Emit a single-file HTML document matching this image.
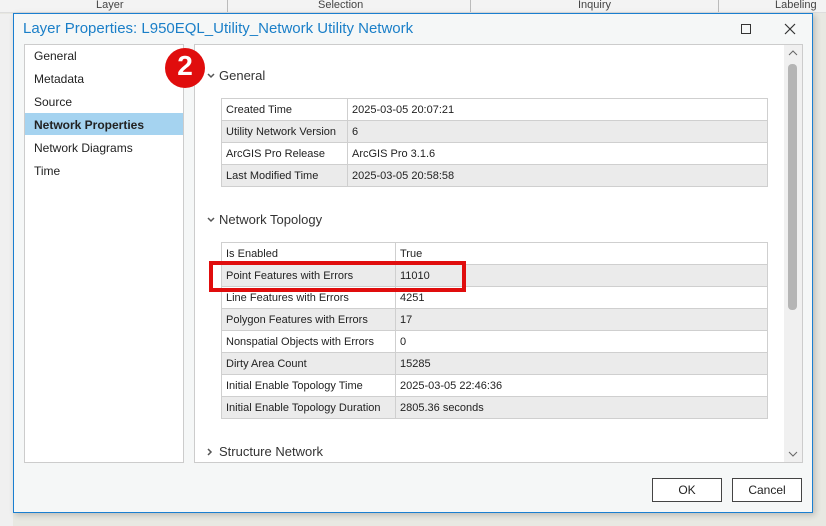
<!DOCTYPE html>
<html><head><style>
*{margin:0;padding:0;box-sizing:border-box}
body{width:826px;height:526px;overflow:hidden;background:#e8e8e2;font-family:"Liberation Sans",sans-serif;position:relative}
.abs{position:absolute}
.t{font-size:11px;color:#222}
table{border-collapse:collapse;position:absolute;font-size:11px;color:#222}
td{border:1px solid #cfcfcf;height:22px;padding:0 4px;white-space:nowrap}
tr:nth-child(even) td{background:#ebebeb}
.sec{font-size:13px;color:#333}
</style></head><body>
<div class="abs" style="left:0;top:0;width:826px;height:13px;background:#f3f3f3;border-bottom:1px solid #ddd"></div>
<div class="abs t" style="left:96px;top:-1px;color:#444">Layer</div>
<div class="abs t" style="left:318px;top:-1px;color:#444">Selection</div>
<div class="abs t" style="left:578px;top:-1px;color:#444">Inquiry</div>
<div class="abs t" style="left:775px;top:-1px;color:#444">Labeling</div>
<div class="abs" style="left:227px;top:0;width:1px;height:12px;background:#bbb"></div>
<div class="abs" style="left:470px;top:0;width:1px;height:12px;background:#bbb"></div>
<div class="abs" style="left:718px;top:0;width:1px;height:12px;background:#bbb"></div>
<div class="abs" style="left:0;top:14px;width:13px;height:512px;background:#f0f0f0"></div>
<div class="abs" style="left:13px;top:13px;width:800px;height:500px;background:#f5f7f7;border:1px solid #1a7fd0;box-shadow:2px 2px 6px rgba(0,0,0,.2)"></div>
<div class="abs" style="left:23px;top:20px;font-size:15px;color:#1a7fc8">Layer Properties: L950EQL_Utility_Network Utility Network</div>
<div class="abs" style="left:741px;top:24px;width:10px;height:10px;border:1px solid #333"></div>
<svg class="abs" style="left:784px;top:23px" width="12" height="12"><path d="M1 1L11 11M11 1L1 11" stroke="#333" stroke-width="1.2"/></svg>
<div class="abs" style="left:24px;top:44px;width:160px;height:419px;background:#fff;border:1px solid #ccc"></div>
<div class="abs" style="left:25px;top:113px;width:158px;height:22px;background:#a5d3f0"></div>
<div class="abs t" style="left:34px;top:49px;font-size:12px">General</div>
<div class="abs t" style="left:34px;top:72px;font-size:12px">Metadata</div>
<div class="abs t" style="left:34px;top:95px;font-size:12px">Source</div>
<div class="abs t" style="left:34px;top:118px;font-size:12px;font-weight:bold">Network Properties</div>
<div class="abs t" style="left:34px;top:141px;font-size:12px">Network Diagrams</div>
<div class="abs t" style="left:34px;top:164px;font-size:12px">Time</div>
<div class="abs" style="left:194px;top:44px;width:609px;height:419px;background:#fff;border:1px solid #ccc"></div>
<div class="abs" style="left:784px;top:45px;width:18px;height:417px;background:#f0f0f0"></div>
<div class="abs" style="left:788px;top:64px;width:9px;height:246px;background:#b5b5b5;border-radius:4px"></div>
<svg class="abs" style="left:788px;top:50px" width="10" height="6"><path d="M1 5L5 1L9 5" stroke="#666" fill="none"/></svg>
<svg class="abs" style="left:788px;top:451px" width="10" height="6"><path d="M1 1L5 5L9 1" stroke="#666" fill="none"/></svg>
<div class="abs" style="left:165px;top:48px;width:40px;height:40px;border-radius:50%;background:#e00d0d"></div>
<div class="abs" style="left:165px;top:50px;width:40px;text-align:center;color:#fff;font-size:28px;font-weight:bold">2</div>
<svg class="abs" style="left:207px;top:73px" width="8" height="6"><path d="M1 1L4 4L7 1" stroke="#555" stroke-width="1.5" fill="none"/></svg>
<div class="abs sec" style="left:219px;top:68px">General</div>
<table style="left:221px;top:98px;width:547px"><colgroup><col style="width:126px"><col></colgroup>
<tr><td>Created Time</td><td>2025-03-05 20:07:21</td></tr>
<tr><td>Utility Network Version</td><td>6</td></tr>
<tr><td>ArcGIS Pro Release</td><td>ArcGIS Pro 3.1.6</td></tr>
<tr><td>Last Modified Time</td><td>2025-03-05 20:58:58</td></tr>
</table>
<svg class="abs" style="left:207px;top:217px" width="8" height="6"><path d="M1 1L4 4L7 1" stroke="#555" stroke-width="1.5" fill="none"/></svg>
<div class="abs sec" style="left:219px;top:212px">Network Topology</div>
<table style="left:221px;top:242px;width:547px"><colgroup><col style="width:174px"><col></colgroup>
<tr><td>Is Enabled</td><td>True</td></tr>
<tr><td>Point Features with Errors</td><td>11010</td></tr>
<tr><td>Line Features with Errors</td><td>4251</td></tr>
<tr><td>Polygon Features with Errors</td><td>17</td></tr>
<tr><td>Nonspatial Objects with Errors</td><td>0</td></tr>
<tr><td>Dirty Area Count</td><td>15285</td></tr>
<tr><td>Initial Enable Topology Time</td><td>2025-03-05 22:46:36</td></tr>
<tr><td>Initial Enable Topology Duration</td><td>2805.36 seconds</td></tr>
</table>
<div class="abs" style="left:209px;top:261px;width:257px;height:31px;border:4px solid #e00d0d"></div>
<svg class="abs" style="left:207px;top:448px" width="6" height="8"><path d="M1 1L4 4L1 7" stroke="#555" stroke-width="1.5" fill="none"/></svg>
<div class="abs sec" style="left:219px;top:444px">Structure Network</div>
<div class="abs" style="left:652px;top:478px;width:70px;height:24px;border:1px solid #444;background:#fff;font-size:12px;text-align:center;line-height:22px;color:#222">OK</div>
<div class="abs" style="left:732px;top:478px;width:70px;height:24px;border:1px solid #444;background:#fff;font-size:12px;text-align:center;line-height:22px;color:#222">Cancel</div>
</body></html>
